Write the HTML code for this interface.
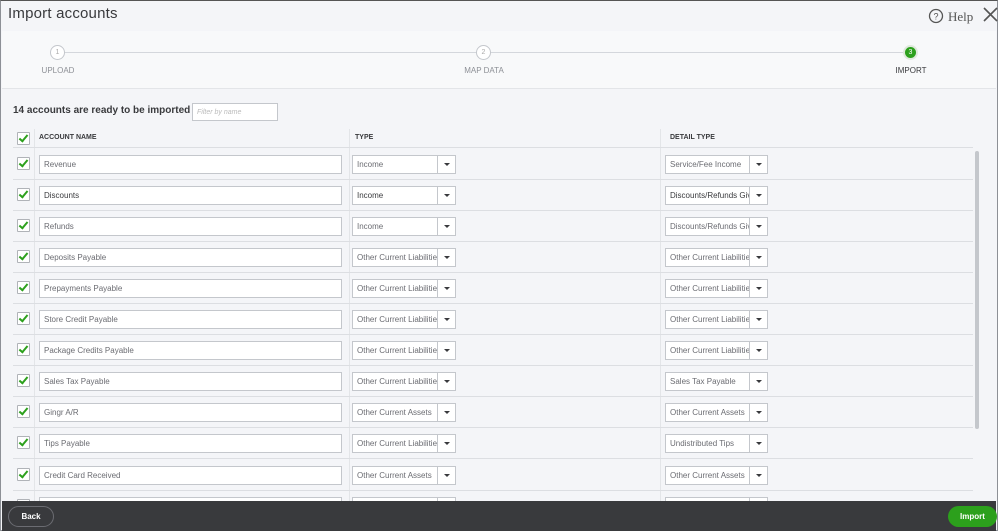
<!DOCTYPE html><html><head><style>
*{box-sizing:border-box;margin:0;padding:0}
body{width:998px;height:531px;overflow:hidden;font-family:"Liberation Sans",sans-serif;background:#f4f5f8;position:relative;color:#393a3d}
.win{position:absolute;left:0;top:0;width:998px;height:531px;border:1px solid #8d9096;border-top:1px solid #555}
.hdr{position:absolute;left:1px;top:1px;right:1px;height:29px;background:#f4f5f8}
.hdr h1{position:absolute;left:6px;top:3px;font-weight:normal;font-size:15px;color:#393a3d;letter-spacing:.2px}
.step{position:absolute;left:1px;right:1px;top:30px;height:58px;background:#f8f9fa;border-bottom:1px solid #e3e5e8}
.line{position:absolute;top:21px;left:56px;width:853px;height:1px;background:#d4d7dc}
.c{position:absolute;top:14px;width:15px;height:15px;border-radius:50%;border:1px solid #c4c7cc;background:#fff;font-size:7px;color:#aaa;text-align:center;line-height:13px}
.lb{position:absolute;top:35px;font-size:8px;color:#8d9096;transform:translateX(-50%)}
.ttl{position:absolute;left:12px;top:104px;font-size:10px;font-weight:bold;color:#393a3d;white-space:nowrap}
.flt{position:absolute;left:191px;top:102px;width:86px;height:18px;border:1px solid #c4c7cc;background:#fff;font-size:7px;font-style:italic;color:#bbb;padding:5px 4px}
.th{position:absolute;top:133px;font-size:7px;font-weight:bold;color:#393a3d}
.vl{position:absolute;width:1px;background:#e3e5e8;top:128px;height:372px}
.hl{position:absolute;left:12px;width:960px;height:1px;background:#dcdee2}
.cb{position:absolute;left:16px;width:13px;height:13px;border:1px solid #b0b3b8;background:#fff;border-radius:1px}
.cb:after{content:"";position:absolute;left:3px;top:0px;width:3px;height:7px;border:solid #2ca01c;border-width:0 2px 2px 0;transform:rotate(40deg)}
.in{position:absolute;height:19px;border:1px solid #c4c7cc;background:#fff;font-size:8px;color:#6b6c72;padding:4px 4px;white-space:nowrap;overflow:hidden}
.sel{position:absolute;height:19px;border:1px solid #c4c7cc;background:#fff;font-size:8px;color:#6b6c72;white-space:nowrap;overflow:hidden}
.sel span{position:absolute;left:4px;top:4px;width:81px;overflow:hidden}
.sel i{position:absolute;right:0;top:0;width:18px;height:17px;border-left:1px solid #c4c7cc;background:#fff}
.sel i:after{content:"";position:absolute;left:6px;top:7px;border:3px solid transparent;border-top:3px solid #393a3d}
.foot{position:absolute;left:1px;right:1px;top:500px;height:30px;background:#393a3d}
.back{position:absolute;left:6px;top:5px;width:46px;height:21px;border:1px solid #6b6c72;border-radius:11px;color:#fff;font-size:8px;font-weight:bold;text-align:center;line-height:19px}
.imp{position:absolute;left:946px;top:5px;width:49px;height:21px;background:#2ca01c;border-radius:11px;color:#fff;font-size:8px;font-weight:bold;text-align:center;line-height:21px}
</style></head><body><div class="win">
<div class="hdr"><h1>Import accounts</h1>
<svg style="position:absolute;left:926px;top:6px" width="16" height="16"><circle cx="8" cy="8" r="6.5" fill="none" stroke="#555" stroke-width="1.3"/><text x="8" y="11.5" font-size="9" text-anchor="middle" fill="#555" font-family="Liberation Sans">?</text></svg>
<div style="position:absolute;left:946px;top:7px;font-family:'Liberation Serif',serif;font-size:13px;color:#555">Help</div>
<svg style="position:absolute;left:981px;top:5px" width="15" height="15"><path d="M1 1L14 14M14 1L1 14" stroke="#555" stroke-width="1.6"/></svg>
</div>
<div class="step"><div class="line"></div>
<div class="c" style="left:48px">1</div><div class="lb" style="left:56px">UPLOAD</div>
<div class="c" style="left:474px">2</div><div class="lb" style="left:482px">MAP DATA</div>
<div class="c" style="left:901px;background:#2ca01c;border:2px solid #dfe9dc;color:#fff;line-height:11px">3</div><div class="lb" style="left:909px;color:#393a3d">IMPORT</div>
</div>
<div class="ttl">14 accounts are ready to be imported</div>
<div class="flt">Filter by name</div>
<div class="vl" style="left:33px"></div><div class="vl" style="left:348px"></div><div class="vl" style="left:659px"></div>
<div class="cb" style="top:131px"></div>
<div class="th" style="left:38px">ACCOUNT NAME</div><div class="th" style="left:354px">TYPE</div><div class="th" style="left:669px">DETAIL TYPE</div>
<div class="hl" style="top:146px"></div>
<div style="position:absolute;left:974px;top:150px;width:4px;height:278px;background:#c4c7cc;border-radius:2px"></div>
<div id="rows"></div>
<div class="foot"><div class="back">Back</div><div class="imp">Import</div></div>
</div>
<script>
var d=[["Revenue","Income","Service/Fee Income"],["Discounts","Income","Discounts/Refunds Giv"],["Refunds","Income","Discounts/Refunds Giv"],["Deposits Payable","Other Current Liabilitie","Other Current Liabilitie"],["Prepayments Payable","Other Current Liabilitie","Other Current Liabilitie"],["Store Credit Payable","Other Current Liabilitie","Other Current Liabilitie"],["Package Credits Payable","Other Current Liabilitie","Other Current Liabilitie"],["Sales Tax Payable","Other Current Liabilitie","Sales Tax Payable"],["Gingr A/R","Other Current Assets","Other Current Assets"],["Tips Payable","Other Current Liabilitie","Undistributed Tips"],["Credit Card Received","Other Current Assets","Other Current Assets"],["","",""]];
var h="";d.forEach(function(r,i){var t=146.5+i*31.1;var c=i==1?"#393a3d":"#6b6c72";
h+='<div class="cb" style="top:'+(t+9)+'px"></div><div class="in" style="left:38px;width:303px;top:'+(t+7)+'px;color:'+c+'">'+r[0]+'</div><div class="sel" style="left:351px;width:104px;top:'+(t+7)+'px;color:'+c+'"><span>'+r[1]+'</span><i></i></div><div class="sel" style="left:664px;width:103px;top:'+(t+7)+'px;color:'+c+'"><span>'+r[2]+'</span><i></i></div><div class="hl" style="top:'+(t+31)+'px"></div>';});
document.getElementById("rows").innerHTML=h;
</script></body></html>
